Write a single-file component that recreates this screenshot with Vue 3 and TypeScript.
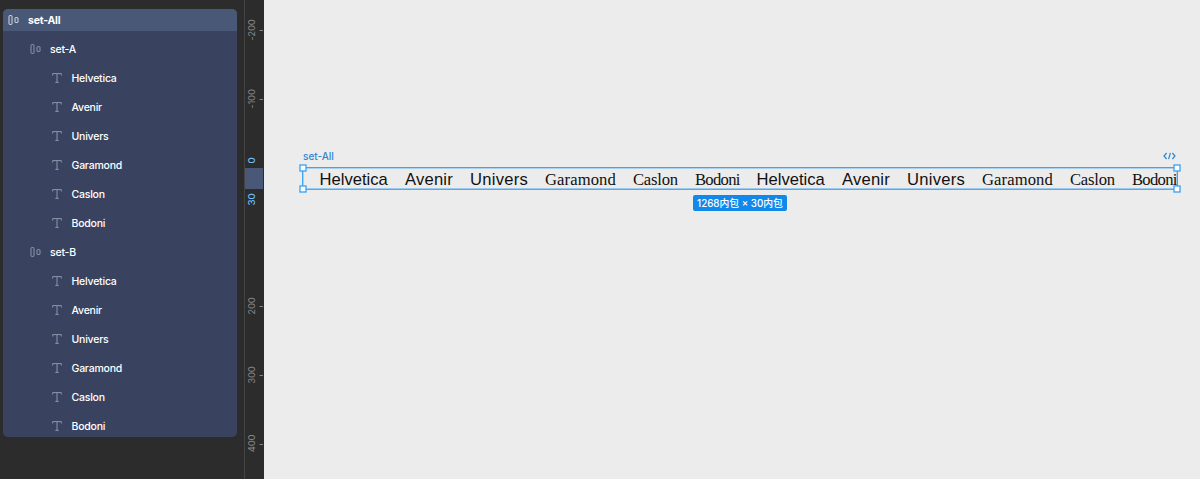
<template>
  <div class="editor">
    <aside class="layers">
      <div class="layer-tree">
        <div
          v-for="(layer, index) in layers"
          :key="index"
          class="layer-row"
          :class="[`level-${layer.level}`]"
        >
          <svg
            v-if="layer.level < 2"
            class="layer-icon frame-icon"
            viewBox="0 0 11 10"
          >
            <rect x="1" y="0.6" width="3" height="8.8" rx="0.6" />
            <rect x="7" y="2.7" width="3" height="4.8" rx="0.4" />
          </svg>
          <svg
            v-else
            class="layer-icon text-icon"
            viewBox="0 0 10 10"
          >
            <path d="M0.7 2.5V0.6H9.3V2.5M5 0.6V9.4M3.3 9.4H6.7" />
          </svg>
          <span class="layer-name">{{ layer.name }}</span>
        </div>
      </div>
    </aside>

    <svg class="ruler" viewBox="0 0 20 479">
      <rect class="ruler-range" x="1" y="168" width="18" height="21" />
      <path class="ruler-edge" d="M0.5 0V479" />
      <g v-for="mark in marks" :key="mark.label">
        <path
          v-if="!mark.active"
          class="ruler-tick"
          :d="`M15.5 ${mark.tick}H19`"
        />
        <text
          class="ruler-label"
          :class="{ active: mark.active }"
          :transform="`translate(11.2 ${mark.y}) rotate(-90)`"
        >
          {{ mark.label }}
        </text>
      </g>
    </svg>

    <main class="canvas">
      <div class="selection">
        <div class="frame-header">
          <span class="frame-name">set-All</span>
          <svg class="code-icon" viewBox="0 0 13 8">
            <path d="M3.6 1L1 4L3.6 7M9.4 1L12 4L9.4 7M7.4 0.8L5.6 7.2" />
          </svg>
        </div>
        <div class="frame">
          <div v-for="set in 2" :key="set" class="word-set">
            <span
              v-for="font in fonts"
              :key="font"
              class="word"
              :class="font.toLowerCase()"
            >{{ font }}</span>
          </div>
          <!-- 选区边框和四角控制点 -->
          <svg class="outline" viewBox="0 0 884 32">
            <rect class="outline-box" x="4.7" y="5.7" width="874.6" height="21.5" />
            <rect
              v-for="corner in corners"
              :key="`${corner.x}-${corner.y}`"
              class="handle"
              :x="corner.x - 3"
              :y="corner.y - 3"
              width="6"
              height="6"
            />
          </svg>
        </div>
        <div class="size-badge">1268内包 × 30内包</div>
      </div>
    </main>
  </div>
</template>

<script setup lang="ts">
interface Layer {
  name: string
  level: number
}

interface Mark {
  label: string
  y: number
  tick?: number
  active?: boolean
}

const fonts = ['Helvetica', 'Avenir', 'Univers', 'Garamond', 'Caslon', 'Bodoni']

function buildSet(name: string): Layer[] {
  return [
    { name, level: 1 },
    ...fonts.map((font) => ({ name: font, level: 2 })),
  ]
}

const layers: Layer[] = [
  { name: 'set-All', level: 0 },
  ...buildSet('set-A'),
  ...buildSet('set-B'),
]

const marks: Mark[] = [
  { label: '-200', y: 30, tick: 30.5 },
  { label: '-100', y: 99, tick: 99.5 },
  { label: '0', y: 160.5, active: true },
  { label: '30', y: 199.5, active: true },
  { label: '200', y: 306, tick: 306.5 },
  { label: '300', y: 375, tick: 375.5 },
  { label: '400', y: 443.5, tick: 444.5 },
]

const corners = [
  { x: 5, y: 6 },
  { x: 879, y: 6 },
  { x: 5, y: 27 },
  { x: 879, y: 27 },
]
</script>

<style>
body {
  background: #2c2c2c;
}
</style>

<style scoped>
.editor {
  display: flex;
  height: 479px;
  overflow: hidden;
  background: #2c2c2c;
  font-family: Inter, "Noto Sans CJK SC", sans-serif;
}

.layers {
  box-sizing: border-box;
  width: 244px;
  padding: 9px 7px 0 3px;
  flex-shrink: 0;
}

.layer-tree {
  height: 428px;
  overflow: hidden;
  border-radius: 5px;
  background: #394360;
}

.layer-row {
  display: flex;
  align-items: center;
  height: 29px;
  color: #fff;
  font-size: 10.5px;
  font-weight: 500;
  letter-spacing: -0.22px;
}

.level-0 {
  height: 22px;
  margin-bottom: 3.5px;
  padding-left: 5px;
  background: #4a5878;
  font-weight: 700;
}

.level-1 {
  padding-left: 27px;
}

.level-2 {
  padding-left: 49px;
}

.layer-icon {
  flex-shrink: 0;
  fill: none;
  stroke: #8e95a7;
  stroke-width: 1;
}

.frame-icon {
  width: 11px;
  height: 10px;
  margin-right: 9px;
}

.level-0 .frame-icon {
  stroke: #d5dae4;
}

.text-icon {
  width: 10px;
  height: 10px;
  margin-right: 9.5px;
}

.ruler {
  width: 20px;
  height: 479px;
  flex-shrink: 0;
}

.ruler-range {
  fill: #4a5878;
}

.ruler-edge {
  stroke: #444;
}

.ruler-tick {
  stroke: #858585;
}

.ruler-label {
  fill: #858585;
  font-size: 9.6px;
  letter-spacing: -0.2px;
  text-anchor: middle;
}

.ruler-label.active {
  fill: #6cbcf8;
  font-weight: 500;
}

.canvas {
  flex: 1;
  background: #ececec;
}

.selection {
  width: 874px;
  margin: 148px 0 0 39px;
}

.frame-header {
  display: flex;
  align-items: center;
  justify-content: space-between;
  height: 15px;
  margin-bottom: 5px;
  color: #2e87cf;
  font-size: 10px;
}

.frame-name {
  font-weight: 500;
}

.code-icon {
  width: 13px;
  height: 8px;
  margin-right: 1px;
  fill: none;
  stroke: #2e87cf;
  stroke-width: 1.2;
}

.frame {
  position: relative;
  display: flex;
  height: 21px;
}

.word-set {
  display: flex;
  width: 437px;
  flex-shrink: 0;
  box-sizing: border-box;
  padding-left: 16.5px;
  gap: 17px;
  color: #111;
  font-family: "Liberation Sans", sans-serif;
  font-size: 16.6px;
  line-height: 23px;
  white-space: nowrap;
}

.word {
  flex-shrink: 0;
}

.helvetica {
  width: 68.5px;
}

.avenir {
  width: 48px;
  letter-spacing: 0.2px;
}

.univers {
  width: 58px;
  letter-spacing: 0.25px;
}

.garamond,
.caslon,
.bodoni {
  font-family: "Liberation Serif", serif;
}

.garamond {
  width: 71px;
  letter-spacing: 0.1px;
}

.caslon {
  width: 45px;
  letter-spacing: -0.2px;
}

.bodoni {
  width: 45px;
  letter-spacing: -0.7px;
}

.outline {
  position: absolute;
  top: -6px;
  left: -5px;
  width: 884px;
  height: 32px;
  fill: none;
  stroke: #36a0f4;
  stroke-width: 1.3;
}

.handle {
  fill: #fff;
}

.size-badge {
  width: 94px;
  height: 16px;
  margin: 6px auto 0;
  border-radius: 2px;
  background: #1089ea;
  color: #fff;
  font-size: 9.8px;
  font-weight: 500;
  line-height: 17px;
  text-align: center;
  white-space: nowrap;
}
</style>
